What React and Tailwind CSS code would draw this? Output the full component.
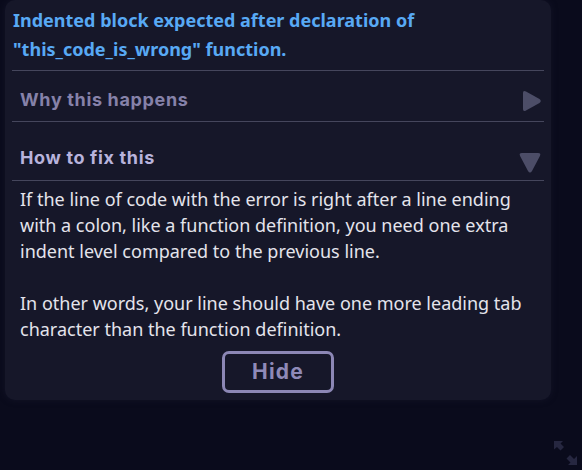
import React from "react";

function RightTri() {
  return (
    <svg width="22" height="24" viewBox="0 0 22 24">
      <path d="M3 4 Q3 1 6 2.5 L19.5 10 Q22 12 19.5 14 L6 21.5 Q3 23 3 20 Z" fill="#4c4d67" />
    </svg>
  );
}

function DownTri() {
  return (
    <svg width="24" height="22" viewBox="0 0 24 22">
      <path d="M4 1 L20 1 Q23.5 1 21.8 4.2 L14 19 Q12 22 10 19 L2.2 4.2 Q0.5 1 4 1 Z" fill="#4c4d67" />
    </svg>
  );
}

function ExpandIcon() {
  return (
    <svg width="23" height="24" viewBox="0 0 23 24">
      <path d="M0 0 L9 0 L6.5 2.5 L10 6 L6.5 9.5 L3 6 L0 8.5 Z" fill="#262740" />
      <path d="M23 24 L14 24 L16.5 21.5 L12.5 17.5 L16 14 L20 18 L23 15 Z" fill="#262740" />
    </svg>
  );
}

export default function App() {
  return (
    <div className="relative w-[582px] h-[470px] overflow-hidden bg-[#0a0b1c]">
      <div className="ml-[5px] w-[546px] rounded-[10px] bg-[#161729] px-[7px] pt-[6px] pb-[7px] shadow-[0_0_6px_rgba(20,21,40,0.9)]">
        <div className="pl-[1px] pr-2 text-[18px] leading-[29px] font-bold text-[#58a9f4] font-['Noto_Sans','Open_Sans',sans-serif]">
          Indented block expected after declaration of "this_code_is_wrong" function.
        </div>
        <div className="mt-[6px] h-px bg-[#45465c]" />
        <div className="flex h-[50px] items-start justify-between pl-2 pr-[2px] pt-[17px]">
          <span className="text-[18px] leading-[24px] font-bold tracking-[0.65px] text-[#8682a9] font-['Inter',sans-serif]">
            Why this happens
          </span>
          <span className="mt-[1px]">
            <RightTri />
          </span>
        </div>
        <div className="h-px bg-[#45465c]" />
        <div className="flex h-[58px] items-start justify-between pl-2 pr-[2px] pt-[24px]">
          <span className="text-[18px] leading-[24px] font-bold tracking-[0.65px] text-[#b8b3dc] font-['Inter',sans-serif]">
            How to fix this
          </span>
          <span className="mt-[6px]">
            <DownTri />
          </span>
        </div>
        <div className="h-px bg-[#45465c]" />
        <div className="pl-2 pr-2 pt-[5px] text-[18px] leading-[26px] text-[#e4e4ec] font-['Noto_Sans','Open_Sans',sans-serif]">
          <p>
            If the line of code with the error is right after a line ending with a colon, like a function definition, you need one extra indent level compared to the previous line.
          </p>
          <p className="mt-[26px]">
            In other words, your line should have one more leading tab character than the function definition.
          </p>
        </div>
        <div className="mt-[9px] flex justify-center">
          <button className="flex h-[42px] w-[112px] items-center justify-center rounded-[7px] border-[3px] border-[#8c87b5] text-[21px] font-bold tracking-[1.2px] text-[#8f8ab8] font-['Inter',sans-serif]">
            Hide
          </button>
        </div>
      </div>
      <div className="absolute left-[554px] top-[441px]">
        <ExpandIcon />
      </div>
    </div>
  );
}
